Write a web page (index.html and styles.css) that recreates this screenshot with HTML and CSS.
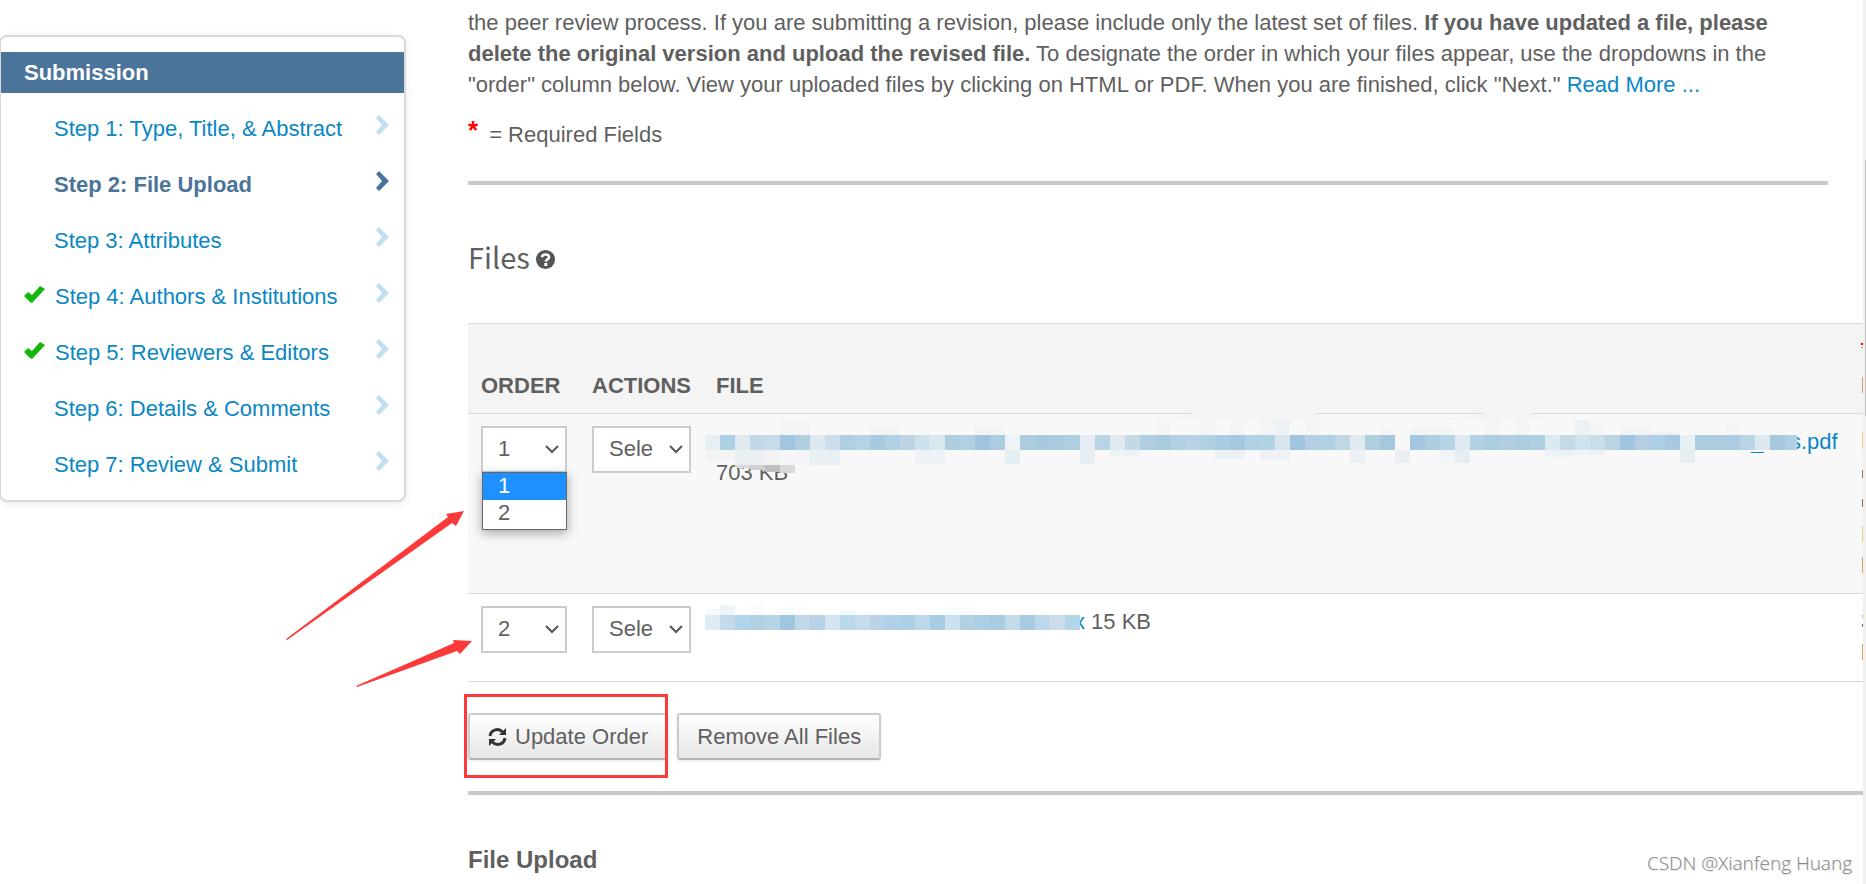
FILE: index.html
```html
<!DOCTYPE html>
<html lang="en">
<head>
  <meta charset="UTF-8">
  <meta name="viewport" content="width=device-width, initial-scale=1.0">
  <title>Step 2: File Upload</title>
  <link rel="stylesheet" href="styles.css">
</head>
<body>
  <svg class="sprite" aria-hidden="true">
    <symbol id="chevron" viewBox="0 0 13 20"><path d="M3 0 L13 10 L3 20 L0 17 L6 10 L0 3 Z"/></symbol>
    <symbol id="check" viewBox="0 0 21 17"><path d="M0 10 L4 6 L8 9 L16 0 L21 3 L8 17 L6 16 Z"/></symbol>
    <symbol id="arrow" viewBox="0 0 14 9"><path d="M1 1 L7 7 L13 1" fill="none" stroke="#555" stroke-width="2"/></symbol>
  </svg>

  <nav class="sidebar">
    <h2 class="sidebar-title">Submission</h2>
    <ul class="steps">
      <li><a class="step" href="#"><span class="mark"></span>Step 1: Type, Title, &amp; Abstract<svg class="chevron"><use href="#chevron"/></svg></a></li>
      <li><a class="step active" href="#"><span class="mark"></span>Step 2: File Upload<svg class="chevron"><use href="#chevron"/></svg></a></li>
      <li><a class="step" href="#"><span class="mark"></span>Step 3: Attributes<svg class="chevron"><use href="#chevron"/></svg></a></li>
      <li><a class="step done" href="#"><span class="mark"><svg class="check"><use href="#check"/></svg></span>Step 4: Authors &amp; Institutions<svg class="chevron"><use href="#chevron"/></svg></a></li>
      <li><a class="step done" href="#"><span class="mark"><svg class="check"><use href="#check"/></svg></span>Step 5: Reviewers &amp; Editors<svg class="chevron"><use href="#chevron"/></svg></a></li>
      <li><a class="step" href="#"><span class="mark"></span>Step 6: Details &amp; Comments<svg class="chevron"><use href="#chevron"/></svg></a></li>
      <li><a class="step" href="#"><span class="mark"></span>Step 7: Review &amp; Submit<svg class="chevron"><use href="#chevron"/></svg></a></li>
    </ul>
  </nav>

  <main class="content">
    <div class="intro">
      <p>the peer review process. If you are submitting a revision, please include only the latest set of files. <b>If you have updated a file, please delete the original version and upload the revised file.</b> To designate the order in which your files appear, use the dropdowns in the "order" column below. View your uploaded files by clicking on HTML or PDF. When you are finished, click "Next." <a href="#">Read More ...</a></p>
      <p class="required"><span class="star">*</span>= Required Fields</p>
    </div>
    <hr class="rule rule-short">

    <h1 class="files-title">Files
      <svg class="help" viewBox="0 0 19 19" role="img" aria-label="Help">
        <circle cx="9.5" cy="9.5" r="9.5" fill="#555"/>
        <path d="M6 7.2 C6.2 3.6 13 3.6 13 7.2 C13 9.3 10 9.3 9.8 11.6" fill="none" stroke="#fff" stroke-width="2.6"/>
        <rect x="8.3" y="13" width="3" height="3" fill="#fff"/>
      </svg>
    </h1>

    <table class="files">
      <thead>
        <tr>
          <th class="col-order">ORDER</th>
          <th class="col-actions">ACTIONS</th>
          <th class="col-file">FILE</th>
          <th class="col-edge"><svg width="2" height="62"><path d="M1 4 v2" stroke="#f00" stroke-width="2"/><path d="M1 8 v1" stroke="#f80" stroke-width="2"/><path d="M1.5 38 v16" stroke="#d9a066"/></svg></th>
        </tr>
      </thead>
      <tbody>
        <tr class="shaded">
          <td>
            <div class="picker picker-order">
              <select aria-label="Order of file 1"><option>1</option><option>2</option></select>
              <svg class="arrow"><use href="#arrow"/></svg>
              <ul class="menu">
                <li class="selected">1</li>
                <li>2</li>
              </ul>
            </div>
          </td>
          <td>
            <div class="picker picker-action">
              <select aria-label="Action for file 1"><option>Select</option></select>
              <svg class="arrow"><use href="#arrow"/></svg>
            </div>
          </td>
          <td>
            <div class="file-name"><svg class="mosaic mosaic-long" id="mosaic1"></svg><a href="#">s.pdf</a></div>
            <div class="file-size">703 KB</div>
          </td>
          <td class="col-edge"><svg width="2" height="155"><path d="M1.5 7 v16 M1.5 100 v16" stroke="#f5c58a"/><path d="M1.5 44 v8 M1.5 73 v8" stroke="#a06a48"/><path d="M1.5 131 v16" stroke="#d9a066"/></svg></td>
        </tr>
        <tr>
          <td>
            <div class="picker picker-order">
              <select aria-label="Order of file 2"><option>2</option><option>1</option></select>
              <svg class="arrow"><use href="#arrow"/></svg>
            </div>
          </td>
          <td>
            <div class="picker picker-action">
              <select aria-label="Action for file 2"><option>Select</option></select>
              <svg class="arrow"><use href="#arrow"/></svg>
            </div>
          </td>
          <td>
            <div class="file-name"><svg class="mosaic mosaic-short" id="mosaic2"></svg><a href="#">x</a>&nbsp;15 KB</div>
          </td>
          <td class="col-edge"><svg width="2" height="63"><path d="M1.5 9 v3" stroke="#f0a850"/><path d="M1.5 18 v3" stroke="#8a5a30"/><path d="M1.5 38 v16" stroke="#e5a860"/></svg></td>
        </tr>
      </tbody>
    </table>

    <div class="buttons">
      <button type="button" class="btn btn-update">
        <svg class="refresh" viewBox="0 0 19 18" aria-hidden="true">
          <path d="M2 8 C3 1 11 0 14.5 4 M17 10 C16 17 8 18 4.5 14" fill="none" stroke="#333" stroke-width="3"/>
          <path d="M18 0 V7 H11 Z M1 18 V11 H8 Z" fill="#333"/>
        </svg>
        Update Order
      </button>
      <button type="button" class="btn">Remove All Files</button>
      <span class="highlight"></span>
    </div>
    <hr class="rule">

    <h3 class="upload-title">File Upload</h3>
  </main>

  <div class="scrollbar"><div class="thumb"></div></div>

  <svg class="pointers" width="480" height="700" aria-hidden="true">
    <path d="M286 639 L448 517 L446 514 L464 511 L456 526 L452 523 L287 640 Z"/>
    <path d="M356 686 L454 643 L453 640 L472 641 L460 654 L457 651 L357 687 Z"/>
  </svg>
  <div class="watermark">CSDN @Xianfeng Huang</div>

  <script>
    // each cell of the blurred file name is 15px wide
    const size = 15;

    const name1 = 'e8eff3 aed0e4 dfeaf0 c2d8e6 c6dce8 a1c6e0 b1cfe1 dde9f0 cbdeea b0cfe3 b5d3e4 a8cade b0d1e4 bdd5e3 cde1ef dae8ef afcde1 b2cfe3 a0c4dd aecce1 edf3f7 aecce0 a8cade aacbdf acd0e2 e7ecf4 b8d4e6 dfeaf0 c3d9e6 b1cfe1 a8cbe0 b2d0e3 b7d2e5 b2d0e2 aacce0 a7c9de b2d1e4 b2d3e4 dae6ed 9fc5e0 b4cee3 b0d0e4 c0d7e4 e1e9f0 b0d0e2 a5c8dd f5f8f7 a5c6e0 b0cce1 b5d5e7 e1e9f0 b2d1e5 acccdf b3cee3 abcce1 aed0e2 dce9f0 c5d9e7 cfe2ef cbdde8 bbd4e3 a0c6df b7cee2 aed0e5 a8c9df e6f1f3 abcce1 adccdf adcce1 b9d4e7 dde9ef a6c8dd b0d0e5';
    const name2 = 'dcebf4 c3daea b3d4e6 b3d1e4 b7d4e7 9fc7e0 c1d7ea b7d2e8 d2e5f1 b9d8e9 c5dced b8d2e6 b3d1e6 aed0e4 bfd8e9 a8cde3 cce1ee b3d1e3 aecfe3 aacce2 c3dae9 a8cbe4 bdd8ea cbddea b3d5e9';

    // x, y, width, height, colour
    const smudges1 = [
      [0, 15, 30, 12, 'f4f4f4'], [30, 15, 30, 15, 'e9eff3'], [60, 15, 15, 15, 'f2f3f1'], [75, 15, 30, 15, 'f4f5f6'],
      [105, 15, 30, 15, 'e9f0f4'], [210, 15, 30, 14, 'ecf2f5'], [300, 15, 15, 14, 'e4edf2'], [375, 15, 15, 14, 'e6eef3'],
      [405, 15, 30, 6, 'edf2f5'], [510, 15, 30, 9, 'ebf1f3'], [555, 15, 30, 11, 'edf2f5'], [645, 15, 15, 13, 'eaf0f4'],
      [690, 15, 15, 13, 'e9eff3'], [735, 15, 15, 13, 'f2f5f7'], [750, 15, 15, 13, 'e5edf1'], [840, 15, 30, 7, 'edf2f5'],
      [870, 15, 30, 5, 'edf2f5'], [975, 15, 15, 13, 'e5edf1'],
      [30, 30, 15, 3, 'd8dadb'], [45, 30, 15, 5, 'd0d0d0'], [60, 30, 15, 7, 'c0c0c0'], [75, 30, 15, 8, 'd8d9db'],
      [75, -15, 30, 15, 'f2f4f6'], [165, -8, 30, 8, 'f2f4f6'], [270, -9, 30, 9, 'f2f4f6'], [450, -15, 15, 15, 'f4f5f6'],
      [495, -15, 15, 15, 'f2f4f6'], [525, -15, 15, 15, 'f2f4f6'], [555, -15, 15, 15, 'f2f4f6'], [570, -15, 15, 15, 'ecf1f4'],
      [600, -15, 15, 15, 'f4f5f6'], [675, -7, 15, 7, 'f2f4f6'], [705, -8, 45, 8, 'f3f4f5'], [780, -15, 15, 15, 'f2f4f6'],
      [810, -15, 15, 15, 'f2f4f6'], [870, -15, 15, 15, 'ecf2f3'], [885, -11, 15, 11, 'f2f4f6'], [915, -9, 30, 9, 'f2f4f6'],
      [945, -3, 30, 3, 'f0f3f4'], [1021, -11, 15, 11, 'f4f5f6'], [1046, 17, 13, 1, '0a87c4']
    ];
    const smudges2 = [
      [0, -6, 15, 6, 'f8fbfd'], [15, -10, 15, 10, 'edf5f9'], [45, -10, 15, 10, 'fafcfe'], [75, -8, 30, 8, 'fafcfe'],
      [135, -5, 15, 5, 'f3f8fb'], [150, -4, 30, 4, 'fafcfe'], [240, -8, 30, 8, 'fbfcfe']
    ];

    function addRect(svg, x, y, width, height, color) {
      const rect = document.createElementNS('http://www.w3.org/2000/svg', 'rect');
      rect.setAttribute('x', x);
      rect.setAttribute('y', y);
      rect.setAttribute('width', width);
      rect.setAttribute('height', height);
      rect.setAttribute('fill', '#' + color);
      svg.appendChild(rect);
    }

    function addPath(svg, d, color) {
      const path = document.createElementNS('http://www.w3.org/2000/svg', 'path');
      path.setAttribute('d', d);
      path.setAttribute('fill', color);
      svg.appendChild(path);
    }

    function drawMosaic(id, colors, smudges, total) {
      const svg = document.getElementById(id);
      smudges.forEach(s => addRect(svg, ...s));
      colors.split(' ').forEach((color, i) => {
        addRect(svg, i * size, 0, Math.min(size, total - i * size), size, color);
      });
    }

    addPath(document.getElementById('mosaic1'), 'M450 -15 L488 -21 V-23 Q550 -28 608 -23 L623 -15 Z M740 -15 L779 -21 V-23 H826 V-21 L852 -15 Z', '#f4f4f4');
    drawMosaic('mosaic1', name1, smudges1, 1092);
    drawMosaic('mosaic2', name2, smudges2, 375);
  </script>
</body>
</html>
```
FILE: styles.css
```css
* {
  box-sizing: border-box;
}

body {
  position: relative;
  display: flex;
  align-items: flex-start;
  min-height: 100vh;
  margin: 0;
  overflow: hidden;
  background: #fff;
  color: #5f5f5f;
  font-family: "Liberation Sans", Arial, sans-serif;
  font-size: 22px;
  line-height: 31px;
}

a {
  color: #0a87c4;
  text-decoration: none;
}

ul {
  margin: 0;
  padding: 0;
  list-style: none;
}

p {
  margin: 0;
}

.sprite {
  position: absolute;
  width: 0;
  height: 0;
}

/* sidebar */
.sidebar {
  flex: 0 0 407px;
  margin: 35px 0 0 -1px;
  padding: 15px 0 8px;
  border: 2px solid #d9d9d9;
  border-radius: 8px;
  box-shadow: 0 2px 8px rgba(0, 0, 0, 0.08);
}

.sidebar-title {
  margin: 0 0 7px;
  padding: 5px 23px;
  background: #4b749a;
  color: #fff;
  font-size: 22px;
  line-height: 31px;
}

.step {
  display: flex;
  align-items: center;
  height: 56px;
  padding: 0 15px 0 23px;
}

.step.active {
  color: #4b749a;
  font-weight: bold;
}

.mark {
  display: flex;
  width: 30px;
}

.done .mark {
  width: 31px;
}

.check {
  width: 21px;
  height: 17px;
  margin-bottom: 4px;
  fill: #14b80c;
}

.chevron {
  width: 13px;
  height: 20px;
  margin: 0 0 6px auto;
  fill: #bfdfef;
}

.active .chevron {
  fill: #4b749a;
}

/* main column */
.content {
  flex: 1;
  min-width: 0;
  margin-left: 62px;
  padding-top: 7px;
}

.intro {
  padding-right: 50px;
}

.required {
  margin-top: 19px;
}

.star {
  margin-right: 11px;
  color: #f00;
  font-size: 26px;
  font-weight: bold;
  line-height: 20px;
  vertical-align: 3px;
}

.rule {
  height: 4px;
  margin: 0;
  border: 0;
  background: #c8c8c8;
}

.rule-short {
  margin: 31px 35px 0 0;
}

.files-title {
  display: flex;
  align-items: center;
  gap: 6px;
  margin: 48px 0 44px;
  font-family: "Noto Sans CJK SC", "Open Sans", sans-serif;
  font-size: 29px;
  font-weight: 400;
  line-height: 46px;
}

.help {
  width: 19px;
  height: 19px;
  margin-top: 6px;
}

.files {
  width: 100%;
  table-layout: fixed;
  border-collapse: separate;
  border-spacing: 0;
  border-top: 1px solid #d9d9d9;
}

.files th,
.files td {
  padding: 12px 0 12px 13px;
  border-bottom: 1px solid #d9d9d9;
  text-align: left;
  vertical-align: top;
}

.files th {
  padding-top: 15px;
  background: #f4f4f4;
  vertical-align: bottom;
}

.shaded td {
  background: #f8f8f8;
}

.col-order {
  width: 111px;
}

.col-actions {
  width: 124px;
}

.files .col-edge {
  width: 2px;
  padding-left: 0;
}

.col-edge svg {
  display: block;
}

.picker {
  position: relative;
  height: 47px;
}

.picker-order {
  width: 86px;
}

.picker-action {
  width: 99px;
}

.picker select {
  width: 100%;
  height: 47px;
  padding: 0 36px 2px 15px;
  border: 2px solid #ccc;
  border-radius: 0;
  appearance: none;
  background: #fff;
  color: #5f5f5f;
  font: inherit;
}

.arrow {
  position: absolute;
  top: 19px;
  right: 8px;
  width: 14px;
  height: 9px;
  pointer-events: none;
}

.menu {
  position: absolute;
  top: 46px;
  left: 1px;
  right: 0;
  padding-bottom: 2px;
  border: 1px solid #666;
  background: #fff;
  box-shadow: 0 3px 10px rgba(0, 0, 0, 0.35);
}

.menu li {
  height: 27px;
  padding-left: 15px;
  line-height: 26px;
}

.menu .selected {
  background: #1e90ff;
  color: #fff;
}

.file-name {
  display: flex;
  margin-left: -11px;
}

.mosaic {
  position: relative;
  flex: none;
  height: 15px;
  margin: 9px -7px 0 0;
  overflow: visible;
}

.mosaic-long {
  width: 1092px;
}

.mosaic-short {
  width: 376px;
}

/* buttons */
.buttons {
  position: relative;
  display: flex;
  gap: 9px;
  padding: 31px 0;
}

.btn {
  display: flex;
  align-items: center;
  gap: 8px;
  height: 47px;
  padding: 0 18px;
  border: 2px solid #ccc;
  border-bottom-color: #b3b3b3;
  border-radius: 3px;
  background: linear-gradient(#fff, #e6e6e6);
  box-shadow: 0 1px 3px rgba(0, 0, 0, 0.1);
  color: #5f5f5f;
  font: inherit;
}

.refresh {
  width: 19px;
  height: 18px;
}

.highlight {
  position: absolute;
  top: 12px;
  left: -4px;
  width: 204px;
  height: 84px;
  border: 3px solid #fc3a3a;
}

.upload-title {
  margin: 49px 0 0;
  font-size: 24px;
  line-height: 31px;
}

.scrollbar {
  align-self: stretch;
  width: 3px;
  padding: 160px 0 0 2px;
  background: #f0f0f0;
}

.thumb {
  height: 256px;
  background: #c1c1c1;
}

.pointers {
  position: absolute;
  top: 0;
  left: 0;
  fill: #fc3a3a;
  pointer-events: none;
}

.watermark {
  position: absolute;
  right: 14px;
  bottom: 5px;
  color: #858585;
  font-family: "Open Sans", sans-serif;
  font-size: 19px;
  font-weight: 300;
  line-height: 31px;
  text-shadow: 1px 1px 1px #ddd;
}
```
